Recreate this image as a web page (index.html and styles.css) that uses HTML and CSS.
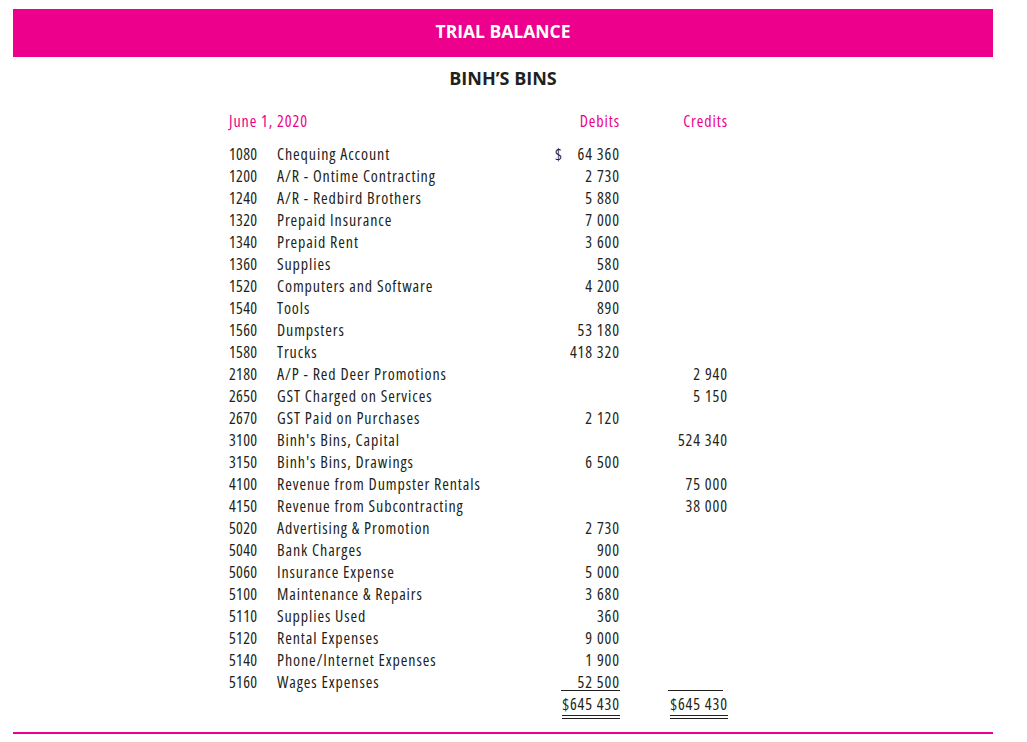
FILE: index.html
```html
<!DOCTYPE html>
<html lang="en">
<head>
<meta charset="utf-8">
<title>Trial Balance</title>
<link rel="stylesheet" href="styles.css">
</head>
<body>
<div class="page">
  <div class="banner">TRIAL BALANCE</div>
  <h1 class="company">BINH’S BINS</h1>
  <div class="sheet">
    <div class="row head">
      <div class="date">June 1, 2020</div>
      <div class="num">Debits</div>
      <div class="num">Credits</div>
    </div>
    <div class="rows">
      <div class="row"><div class="code">1080</div><div class="name">Chequing Account</div><div class="num dollar"><span>$</span><span>64 360</span></div><div class="num"></div></div>
      <div class="row"><div class="code">1200</div><div class="name">A/R - Ontime Contracting</div><div class="num">2 730</div><div class="num"></div></div>
      <div class="row"><div class="code">1240</div><div class="name">A/R - Redbird Brothers</div><div class="num">5 880</div><div class="num"></div></div>
      <div class="row"><div class="code">1320</div><div class="name">Prepaid Insurance</div><div class="num">7 000</div><div class="num"></div></div>
      <div class="row"><div class="code">1340</div><div class="name">Prepaid Rent</div><div class="num">3 600</div><div class="num"></div></div>
      <div class="row"><div class="code">1360</div><div class="name">Supplies</div><div class="num">580</div><div class="num"></div></div>
      <div class="row"><div class="code">1520</div><div class="name">Computers and Software</div><div class="num">4 200</div><div class="num"></div></div>
      <div class="row"><div class="code">1540</div><div class="name">Tools</div><div class="num">890</div><div class="num"></div></div>
      <div class="row"><div class="code">1560</div><div class="name">Dumpsters</div><div class="num">53 180</div><div class="num"></div></div>
      <div class="row"><div class="code">1580</div><div class="name">Trucks</div><div class="num">418 320</div><div class="num"></div></div>
      <div class="row"><div class="code">2180</div><div class="name">A/P - Red Deer Promotions</div><div class="num"></div><div class="num">2 940</div></div>
      <div class="row"><div class="code">2650</div><div class="name">GST Charged on Services</div><div class="num"></div><div class="num">5 150</div></div>
      <div class="row"><div class="code">2670</div><div class="name">GST Paid on Purchases</div><div class="num">2 120</div><div class="num"></div></div>
      <div class="row"><div class="code">3100</div><div class="name">Binh's Bins, Capital</div><div class="num"></div><div class="num">524 340</div></div>
      <div class="row"><div class="code">3150</div><div class="name">Binh's Bins, Drawings</div><div class="num">6 500</div><div class="num"></div></div>
      <div class="row"><div class="code">4100</div><div class="name">Revenue from Dumpster Rentals</div><div class="num"></div><div class="num">75 000</div></div>
      <div class="row"><div class="code">4150</div><div class="name">Revenue from Subcontracting</div><div class="num"></div><div class="num">38 000</div></div>
      <div class="row"><div class="code">5020</div><div class="name">Advertising &amp; Promotion</div><div class="num">2 730</div><div class="num"></div></div>
      <div class="row"><div class="code">5040</div><div class="name">Bank Charges</div><div class="num">900</div><div class="num"></div></div>
      <div class="row"><div class="code">5060</div><div class="name">Insurance Expense</div><div class="num">5 000</div><div class="num"></div></div>
      <div class="row"><div class="code">5100</div><div class="name">Maintenance &amp; Repairs</div><div class="num">3 680</div><div class="num"></div></div>
      <div class="row"><div class="code">5110</div><div class="name">Supplies Used</div><div class="num">360</div><div class="num"></div></div>
      <div class="row"><div class="code">5120</div><div class="name">Rental Expenses</div><div class="num">9 000</div><div class="num"></div></div>
      <div class="row"><div class="code">5140</div><div class="name">Phone/Internet Expenses</div><div class="num">1 900</div><div class="num"></div></div>
      <div class="row"><div class="code">5160</div><div class="name">Wages Expenses</div><div class="num"><span class="rule-debit">52 500</span></div><div class="num"><span class="rule-credit"></span></div></div>
      <div class="row total"><div class="code"></div><div class="name"></div><div class="num"><span class="dbl">$645 430</span></div><div class="num"><span class="dbl">$645 430</span></div></div>
    </div>
  </div>
  <div class="bottom-rule"></div>
</div>
</body>
</html>
```

FILE: styles.css
```css
html, body {
  margin: 0;
  padding: 0;
  background: #ffffff;
}

body {
  font-family: "Open Sans", "Liberation Sans", Arial, sans-serif;
  color: #231f20;
}

.page {
  width: 980px;
  margin-left: 13px;
  padding-top: 9px;
}

.banner {
  height: 48px;
  background: #ec008c;
  color: #ffffff;
  font-weight: bold;
  font-size: 17.5px;
  line-height: 45px;
  text-align: center;
}

.company {
  margin: 10px 0 0;
  font-size: 18px;
  line-height: 22px;
  font-weight: bold;
  text-align: center;
}

.sheet {
  margin-left: 216px;
  width: 498px;
  margin-top: 21px;
  font-size: 16px;
  font-weight: 400;
  font-stretch: 75%;
  letter-spacing: 0.9px;
}

.row {
  display: grid;
  grid-template-columns: 48px 278px 64px 108px;
  height: 22px;
  line-height: 22px;
  white-space: nowrap;
}

.head {
  color: #ec008c;
  margin-bottom: 11px;
}

.head .date {
  grid-column: 1 / 3;
}

.code {
  letter-spacing: 0.3px;
}

.num {
  text-align: right;
  margin-right: -1px;
}

.dollar {
  display: flex;
  justify-content: space-between;
}

.rule-debit {
  display: inline-block;
  width: 59px;
  height: 19px;
  line-height: 22px;
  vertical-align: top;
  border-bottom: 1px solid #231f20;
}

.rule-credit {
  display: inline-block;
  width: 55px;
  height: 19px;
  margin-right: 5px;
  vertical-align: top;
  border-bottom: 1px solid #231f20;
}

.total .num .dbl {
  display: inline-block;
  height: 22px;
  line-height: 22px;
  vertical-align: top;
  border-bottom: 4px double #231f20;
}

.bottom-rule {
  margin-top: 17px;
  height: 2px;
  background: #ec008c;
}
```
